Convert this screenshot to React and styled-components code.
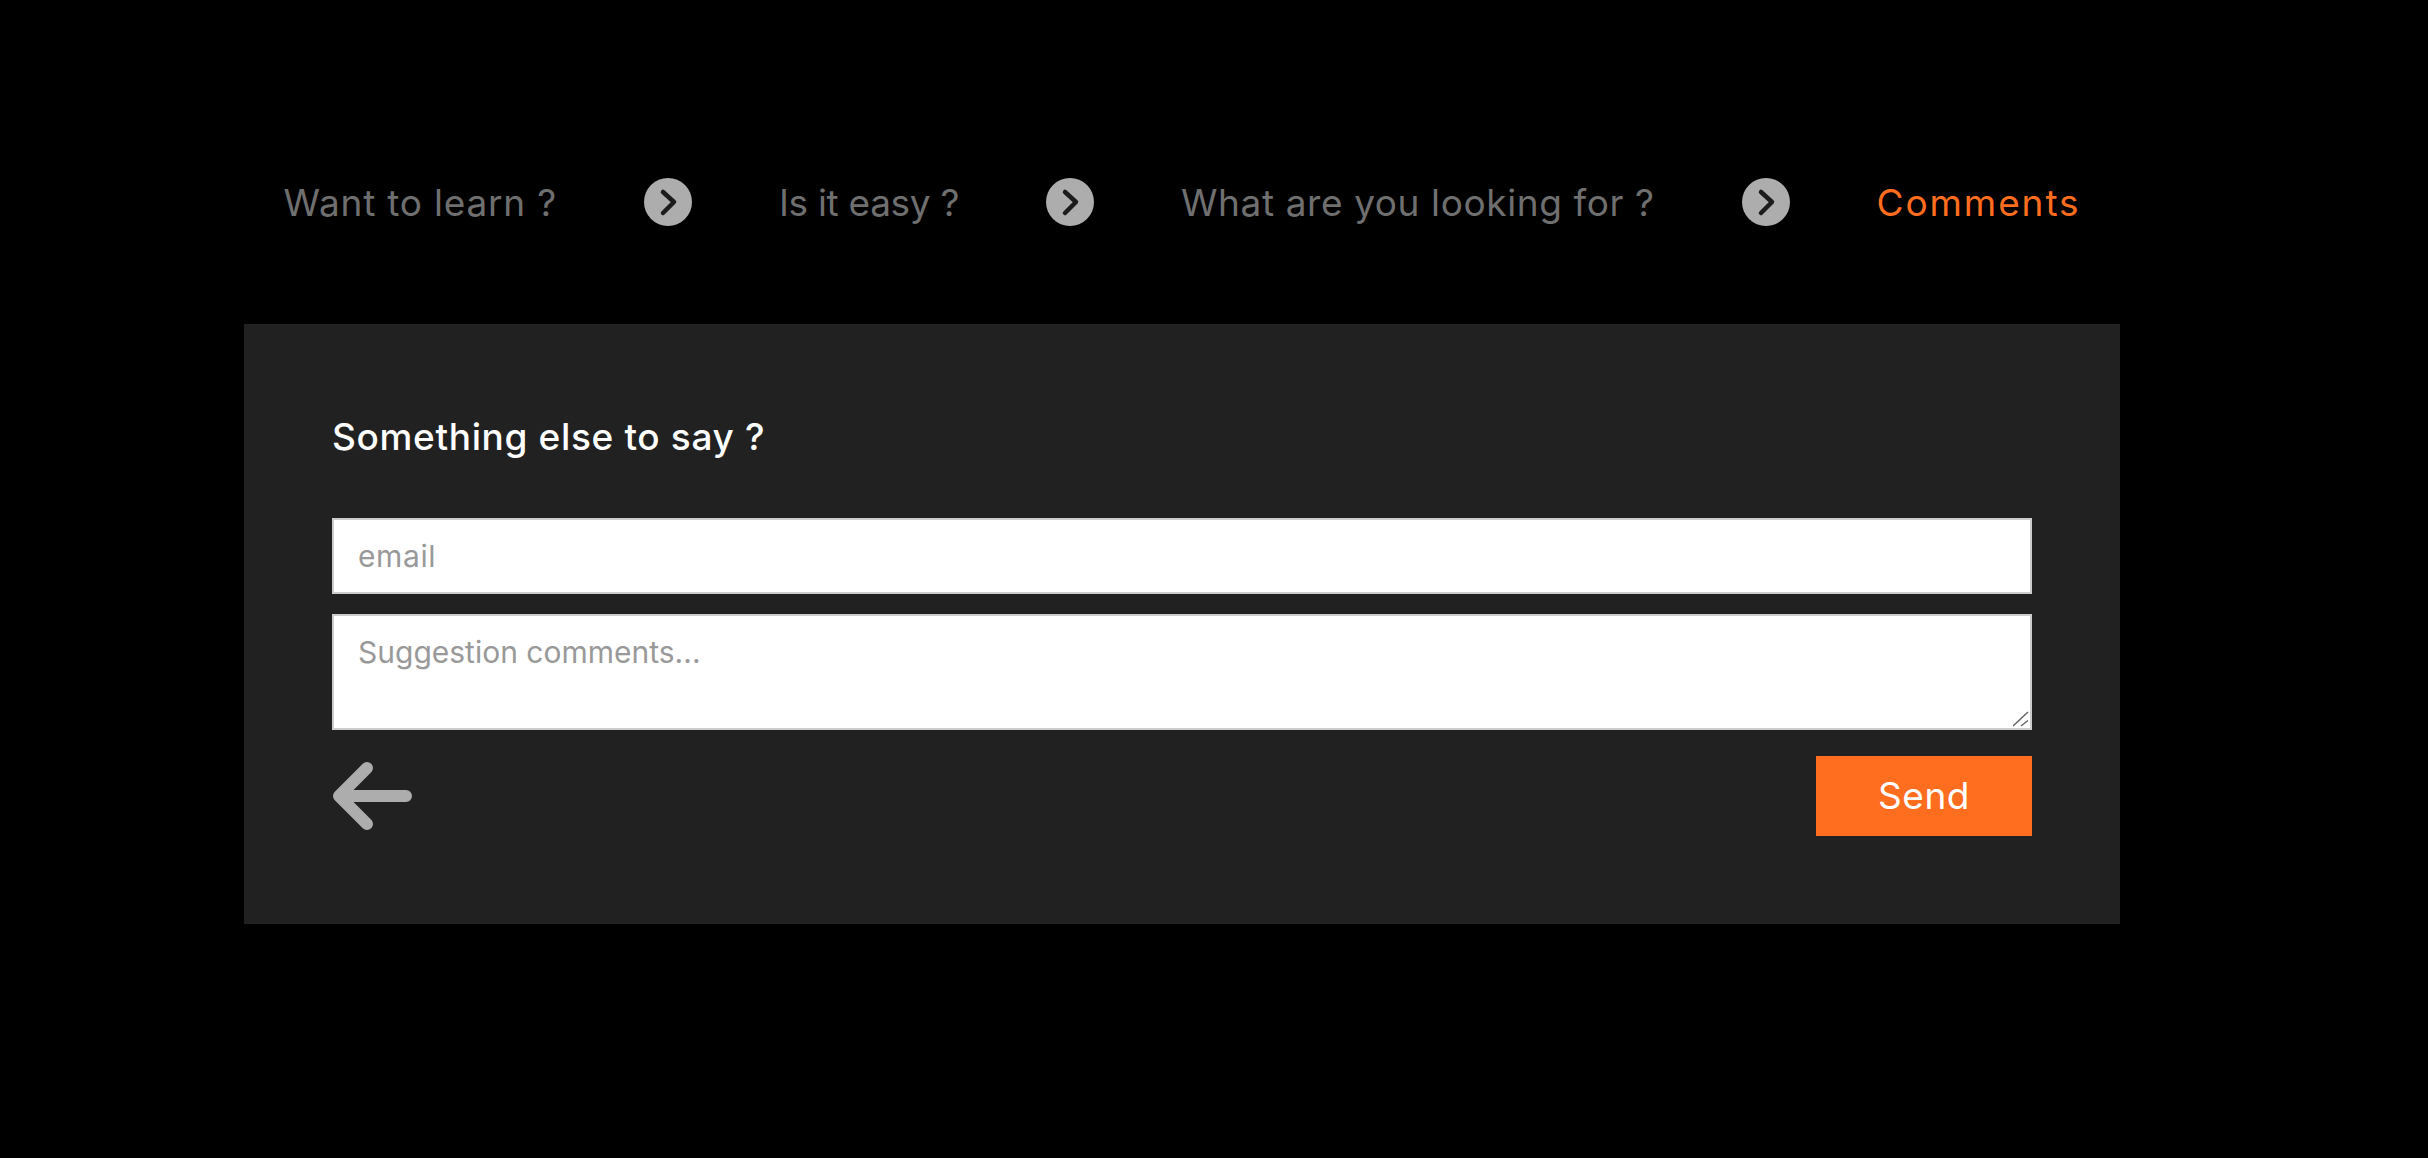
import styled, { createGlobalStyle } from "styled-components";

const GlobalStyle = createGlobalStyle`
  html, body {
    margin: 0;
    padding: 0;
    background-color: #000;
  }
  * {
    box-sizing: border-box;
  }
`;

const fontStack = `"Inter", "Noto Sans", sans-serif`;

const Page = styled.div`
  width: 1876px;
  margin-left: 244px;
  padding-top: 178px;
  font-family: ${fontStack};
`;

const Steps = styled.nav`
  display: flex;
  align-items: center;
  justify-content: center;
  gap: 87px;
  height: 48px;
  margin-bottom: 98px;
`;

const Step = styled.span`
  font-size: 37px;
  font-weight: 400;
  letter-spacing: ${(props) => props.$tracking}px;
  white-space: nowrap;
  color: ${(props) => (props.$active ? "#ff6d1f" : "#6f6f6f")};
`;

const StepArrow = styled.span`
  display: flex;
  flex: none;
  width: 48px;
  height: 48px;
  border-radius: 50%;
  background-color: #adadad;
`;

const Panel = styled.section`
  height: 600px;
  padding: 88px;
  background-color: #212121;
`;

const Title = styled.h2`
  margin: 0 0 62px;
  height: 44px;
  font-size: 37px;
  line-height: 49px;
  font-weight: 500;
  letter-spacing: 0.65px;
  color: #fff;
`;

const Form = styled.form`
  display: flex;
  flex-direction: column;
`;

const EmailInput = styled.input`
  display: block;
  width: 100%;
  height: 76px;
  margin-bottom: 20px;
  padding: 0 24px;
  border: 2px solid #ccc;
  border-radius: 0;
  outline: none;
  background-color: #fff;
  font-family: ${fontStack};
  font-size: 30px;
  letter-spacing: 0.6px;
  &::placeholder {
    color: #999;
  }
`;

const CommentsField = styled.div`
  position: relative;
  height: 116px;
  margin-bottom: 26px;
`;

const CommentsInput = styled.textarea`
  display: block;
  width: 100%;
  height: 100%;
  padding: 19px 24px;
  border: 2px solid #ccc;
  border-radius: 0;
  outline: none;
  resize: none;
  background-color: #fff;
  font-family: ${fontStack};
  font-size: 30px;
  line-height: 34px;
  &::placeholder {
    color: #999;
  }
`;

const ResizeGrip = styled.svg`
  position: absolute;
  right: 3px;
  bottom: 3px;
  pointer-events: none;
`;

const Actions = styled.div`
  display: flex;
  align-items: center;
  justify-content: space-between;
`;

const BackButton = styled.button`
  display: flex;
  padding: 0;
  border: 0;
  background: none;
  cursor: pointer;
`;

const SendButton = styled.button`
  width: 216px;
  height: 80px;
  padding: 0 0 2px;
  border: 0;
  background-color: #ff6d1f;
  color: #fff;
  font-family: ${fontStack};
  font-size: 37px;
  font-weight: 400;
  letter-spacing: 0.6px;
  cursor: pointer;
`;

function ChevronIcon() {
  return (
    <svg width="48" height="48" viewBox="0 0 48 48" fill="none">
      <path
        d="M19 14 L30 24 L19 35"
        stroke="#1c1c1c"
        strokeWidth="4.5"
        strokeLinecap="round"
        strokeLinejoin="round"
      />
    </svg>
  );
}

function BackIcon() {
  return (
    <svg width="80" height="68" viewBox="0 0 80 68" fill="none">
      <path
        d="M74 34 H7 M35 6 L7 34 L35 62"
        stroke="#adadad"
        strokeWidth="12"
        strokeLinecap="round"
        strokeLinejoin="round"
      />
    </svg>
  );
}

export default function App() {
  return (
    <>
      <GlobalStyle />
      <Page>
        <Steps>
          <Step $tracking={0.8}>Want to learn ?</Step>
          <StepArrow>
            <ChevronIcon />
          </StepArrow>
          <Step $tracking={-0.3}>Is it easy ?</Step>
          <StepArrow>
            <ChevronIcon />
          </StepArrow>
          <Step $tracking={0.6}>What are you looking for ?</Step>
          <StepArrow>
            <ChevronIcon />
          </StepArrow>
          <Step $active $tracking={1.9}>
            Comments
          </Step>
        </Steps>
        <Panel>
          <Title>Something else to say ?</Title>
          <Form>
            <EmailInput type="email" placeholder="email" />
            <CommentsField>
              <CommentsInput placeholder="Suggestion comments..." />
              <ResizeGrip width="16" height="16" viewBox="0 0 16 16" fill="none">
                <path d="M0 15 L15 1 M8 15 L15 9.5" stroke="#666" strokeWidth="1.5" />
              </ResizeGrip>
            </CommentsField>
            <Actions>
              <BackButton type="button">
                <BackIcon />
              </BackButton>
              <SendButton type="button">Send</SendButton>
            </Actions>
          </Form>
        </Panel>
      </Page>
    </>
  );
}
